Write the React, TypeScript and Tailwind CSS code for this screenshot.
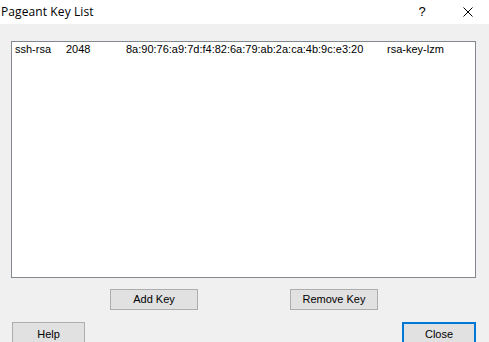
import React from 'react';

const keys = [
  {
    type: 'ssh-rsa',
    bits: '2048',
    fingerprint: '8a:90:76:a9:7d:f4:82:6a:79:ab:2a:ca:4b:9c:e3:20',
    comment: 'rsa-key-lzm',
  },
];

function Btn({ label, primary, className }: { label: string; primary?: boolean; className?: string }) {
  return (
    <button
      type="button"
      className={
        'bg-[#e1e1e1] text-black text-[11px] leading-none flex items-center justify-center ' +
        (primary ? 'border-2 border-[#0078d7] ' : 'border border-[#adadad] ') +
        (className ?? '')
      }
    >
      {label}
    </button>
  );
}

export default function App() {
  return (
    <div
      className="w-[489px] h-[342px] overflow-hidden bg-[#f0f0f0] flex flex-col"
      style={{ fontFamily: '"Liberation Sans", Arial, sans-serif' }}
    >
      <div className="h-[24px] bg-white flex items-center shrink-0">
        <span className="text-[12px] text-black pl-[1px] font-['Open_Sans',sans-serif] tracking-[0.1px]">Pageant Key List</span>
        <span className="ml-auto text-[13px] text-black w-[10px] mr-[36px] text-center">?</span>
        <svg width="10" height="10" viewBox="0 0 10 10" className="mr-[16px]">
          <path d="M0.5 0.5 L9.5 9.5 M9.5 0.5 L0.5 9.5" stroke="#000" strokeWidth="1" />
        </svg>
      </div>
      <div className="pl-[11px] pr-[13px] pt-[17px] flex flex-col">
        <div className="h-[237px] bg-white border border-[#828790] pt-[1px]">
          {keys.map((k) => (
            <div key={k.fingerprint} className="flex h-[13px] items-center text-[11px] text-black whitespace-nowrap">
              <span className="w-[54px] pl-[3px]">{k.type}</span>
              <span className="w-[60px]">{k.bits}</span>
              <span className="w-[261px]">{k.fingerprint}</span>
              <span>{k.comment}</span>
            </div>
          ))}
        </div>
        <div className="flex mt-[11px] h-[21px]">
          <Btn label="Add Key" className="ml-[99px] w-[88px] h-[21px]" />
          <Btn label="Remove Key" className="ml-[92px] w-[88px] h-[21px]" />
        </div>
        <div className="flex justify-between mt-[12px]">
          <Btn label="Help" className="ml-[1px] w-[73px] h-[24px]" />
          <Btn label="Close" primary className="w-[74px] h-[24px]" />
        </div>
      </div>
    </div>
  );
}
